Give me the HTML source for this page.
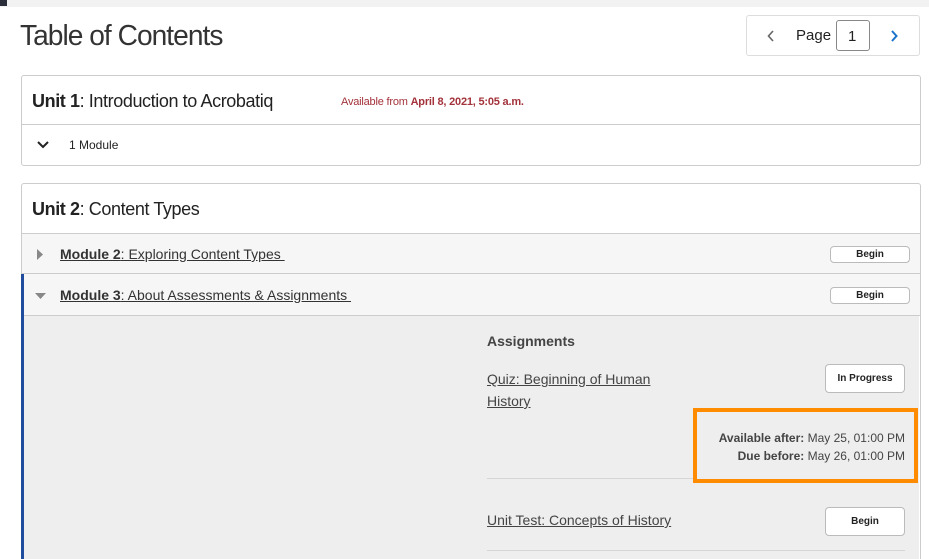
<!DOCTYPE html>
<html><head><style>
*{margin:0;padding:0;box-sizing:border-box}
html,body{width:929px;height:559px;overflow:hidden}
body{background:#fff;font-family:"Liberation Sans",sans-serif;color:#222;position:relative}
.a{position:absolute}
.btn{position:absolute;background:#fff;border:1px solid #bbb;border-radius:4px;font-size:10px;font-weight:bold;text-align:center;color:#222}
u{text-decoration:underline}
</style></head><body>
<div class="a" style="left:0;top:0;width:929px;height:7px;background:#f2f2f2"></div>
<div class="a" style="left:0;top:0;width:7px;height:6px;background:#2a2d3a"></div>
<div class="a" style="left:20px;top:20px;font-size:29px;letter-spacing:-1px;color:#333;transform:scaleX(0.97);transform-origin:left">Table of Contents</div>
<div class="a" style="left:746px;top:15px;width:174px;height:41px;border:1px solid #ddd;border-radius:3px"></div>
<svg class="a" style="left:767px;top:30px" width="8" height="12"><path d="M6 1L1.5 6 6 11" fill="none" stroke="#666" stroke-width="1.6"/></svg>
<div class="a" style="left:796px;top:27px;font-size:15px;color:#222">Page</div>
<div class="a" style="left:836px;top:20px;width:34px;height:31px;border:1px solid #888;border-radius:3px;font-size:15px;padding:7px 0 0 11px">1</div>
<svg class="a" style="left:890px;top:30px" width="8" height="12"><path d="M2 1l4.5 5L2 11" fill="none" stroke="#1a73c8" stroke-width="2"/></svg>

<div class="a" style="left:21px;top:75px;width:900px;height:91px;border:1px solid #ccc;border-radius:3px"></div>
<div class="a" style="left:22px;top:124px;width:898px;height:1px;background:#ccc"></div>
<div class="a" style="left:32px;top:91px;font-size:18px;letter-spacing:-0.4px"><b>Unit 1</b>: Introduction to Acrobatiq</div>
<div class="a" style="left:341px;top:96px;font-size:11px;color:#a3323a;letter-spacing:-0.2px">Available from <b>April 8, 2021, 5:05 a.m.</b></div>
<svg class="a" style="left:37px;top:141px" width="12" height="8"><path d="M1 1l5 5 5-5" fill="none" stroke="#222" stroke-width="2"/></svg>
<div class="a" style="left:69px;top:138px;font-size:12px">1 Module</div>

<div class="a" style="left:21px;top:183px;width:900px;height:376px;border:1px solid #ccc;border-bottom:none;border-radius:3px 3px 0 0"></div>
<div class="a" style="left:32px;top:199px;font-size:18px;letter-spacing:-0.4px"><b>Unit 2</b>: Content Types</div>
<div class="a" style="left:22px;top:233px;width:898px;height:41px;background:#f6f6f6;border-top:1px solid #ccc;border-bottom:1px solid #ccc"></div>
<svg class="a" style="left:37px;top:249px" width="7" height="11"><path d="M0 0l6 5.5-6 5.5z" fill="#888"/></svg>
<div class="a" style="left:60px;top:246px;font-size:14px;color:#333"><u><b>Module 2</b>: Exploring Content Types&nbsp;</u></div>
<div class="btn" style="left:830px;top:246px;width:80px;height:17px;padding-top:2px">Begin</div>
<div class="a" style="left:22px;top:274px;width:898px;height:42px;background:#f6f6f6;border-bottom:1px solid #ccc"></div>
<svg class="a" style="left:35px;top:293px" width="11" height="7"><path d="M0 0h11l-5.5 6z" fill="#888"/></svg>
<div class="a" style="left:60px;top:287px;font-size:14px;color:#333"><u><b>Module 3</b>: About Assessments &amp; Assignments&nbsp;</u></div>
<div class="btn" style="left:830px;top:287px;width:80px;height:17px;padding-top:2px">Begin</div>
<div class="a" style="left:22px;top:316px;width:897px;height:243px;background:#eee"></div>
<div class="a" style="left:21px;top:274px;width:3px;height:285px;background:#1f4c9c"></div>

<div class="a" style="left:487px;top:333px;font-size:14px;font-weight:bold;color:#444">Assignments</div>
<div class="a" style="left:487px;top:368px;font-size:14px;line-height:22px;color:#444;width:190px"><u>Quiz: Beginning of Human History</u></div>
<div class="btn" style="left:825px;top:364px;width:80px;height:29px;padding-top:8px">In Progress</div>
<div class="a" style="left:487px;top:478px;width:418px;height:1px;background:#d5d5d5"></div>
<div class="a" style="left:693px;top:408px;width:225px;height:75px;border:4px solid #ff8c00;background:#eee"></div>
<div class="a" style="left:700px;top:429px;width:205px;text-align:right;font-size:12px;line-height:18px;color:#444"><b>Available after:</b> May 25, 01:00 PM<br><b>Due before:</b> May 26, 01:00 PM</div>
<div class="a" style="left:487px;top:512px;font-size:14px;color:#444"><u>Unit Test: Concepts of History</u></div>
<div class="btn" style="left:825px;top:507px;width:80px;height:29px;padding-top:8px">Begin</div>
<div class="a" style="left:487px;top:550px;width:418px;height:1px;background:#d5d5d5"></div>
</body></html>
